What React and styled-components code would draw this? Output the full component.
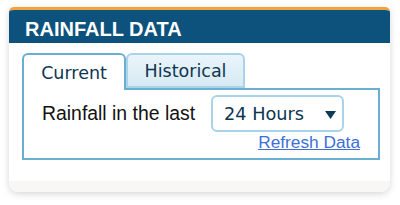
import React from "react";
import styled, { createGlobalStyle } from "styled-components";

const Global = createGlobalStyle`
  html, body { margin: 0; padding: 0; background: #ffffff; }
  body { width: 400px; height: 205px; overflow: hidden; }
`;

const Page = styled.div`
  padding: 7px 10px 0 9px;
`;

const Card = styled.div`
  width: 381px;
  height: 185px;
  box-sizing: border-box;
  background: #ffffff;
  border-top: 3px solid #f4a33c;
  border-radius: 5px 5px 9px 9px;
  box-shadow: 0 2px 7px rgba(0, 0, 0, 0.16);
  display: flex;
  flex-direction: column;
  overflow: hidden;
`;

const Header = styled.div`
  height: 33px;
  overflow: hidden;
  background: #0c527c;
  color: #ffffff;
  font-family: "Liberation Sans", Arial, sans-serif;
  font-weight: bold;
  font-size: 20px;
  line-height: 38px;
  padding-left: 16px;
`;

const Body = styled.div`
  flex: 1;
  padding: 9px 10px 0 13px;
`;

const Tabs = styled.div`
  display: flex;
  align-items: flex-end;
  height: 36px;
  position: relative;
  z-index: 1;
`;

const Tab = styled.div`
  box-sizing: border-box;
  height: ${(p) => (p.$active ? "37px" : "35px")};
  margin-bottom: ${(p) => (p.$active ? "-2px" : "0")};
  padding: 0 16px;
  font-family: "DejaVu Sans", Verdana, sans-serif;
  font-size: 17.5px;
  color: #0d3550;
  border: 2px solid ${(p) => (p.$active ? "#6aaed1" : "#a8d3e8")};
  border-bottom: ${(p) => (p.$active ? "none" : "2px solid #a8d3e8")};
  border-radius: 6px 6px 0 0;
  background: ${(p) =>
    p.$active ? "#ffffff" : "linear-gradient(#eaf4fa, #d7eaf4)"};
  line-height: ${(p) => (p.$active ? "36px" : "32px")};
  width: ${(p) => p.$w}px;
  text-align: center;
`;

const Panel = styled.div`
  box-sizing: border-box;
  height: 72px;
  border: 2px solid #6aaed1;
  padding: 5px 18px 0 18px;
  display: flex;
  flex-direction: column;
`;

const Row = styled.div`
  display: flex;
  align-items: center;
  gap: 16px;
`;

const Label = styled.span`
  font-family: "Liberation Sans", Arial, sans-serif;
  font-size: 19.4px;
  color: #111111;
`;

const Select = styled.div`
  box-sizing: border-box;
  width: 133px;
  height: 37px;
  border: 2px solid #a8d3e8;
  border-radius: 6px;
  display: flex;
  align-items: center;
  justify-content: space-between;
  padding: 0 6px 0 11px;
  font-family: "DejaVu Sans", Verdana, sans-serif;
  font-size: 17.7px;
  color: #0d3550;
`;

const Arrow = styled.svg`
  width: 11px;
  height: 8px;
  margin-top: 2px;
`;

const LinkRow = styled.div`
  display: flex;
  justify-content: flex-end;
`;

const Link = styled.a`
  font-family: "Liberation Sans", Arial, sans-serif;
  font-size: 17.3px;
  color: #3d6fd9;
  text-decoration: underline;
  line-height: 20px;
  cursor: pointer;
`;

const Footer = styled.div`
  height: 11px;
  background: #f8f7f5;
`;

export default function App() {
  return (
    <Page>
      <Global />
      <Card>
        <Header>RAINFALL DATA</Header>
        <Body>
          <Tabs>
            <Tab $active $w={104}>Current</Tab>
            <Tab $w={119}>Historical</Tab>
          </Tabs>
          <Panel>
            <Row>
              <Label>Rainfall in the last</Label>
              <Select>
                <span>24 Hours</span>
                <Arrow viewBox="0 0 11 8">
                  <polygon points="0,0 11,0 5.5,8" fill="#0d3a55" />
                </Arrow>
              </Select>
            </Row>
            <LinkRow>
              <Link>Refresh Data</Link>
            </LinkRow>
          </Panel>
        </Body>
        <Footer />
      </Card>
    </Page>
  );
}
